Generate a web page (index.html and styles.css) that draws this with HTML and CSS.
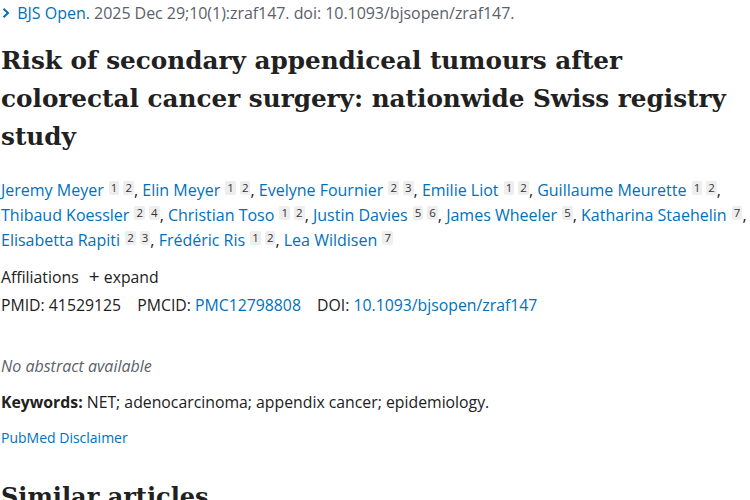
FILE: index.html
```html
<!DOCTYPE html>
<html>
<head>
<meta charset="utf-8">
<link rel="stylesheet" href="styles.css">
</head>
<body>
<main class="article">
  <div class="citation">
    <span class="chev"><svg width="10" height="12" viewBox="0 0 10 12"><path d="M2.5 1.8 L7 6 L2.5 10.2" fill="none" stroke="#0071bc" stroke-width="2"/></svg></span>
    <a class="journal">BJS Open.</a> <span class="cit">2025 Dec 29;10(1):zraf147. doi: 10.1093/bjsopen/zraf147.</span>
  </div>
  <h1 class="title">Risk of secondary appendiceal tumours after<br>colorectal cancer surgery: nationwide Swiss registry<br>study</h1>
  <div class="authors">
    <a>Jeremy Meyer</a> <sup><span>1</span><span>2</span></sup>, <a>Elin Meyer</a> <sup><span>1</span><span>2</span></sup>, <a>Evelyne Fournier</a> <sup><span>2</span><span>3</span></sup>, <a>Emilie Liot</a> <sup><span>1</span><span>2</span></sup>, <a>Guillaume Meurette</a> <sup><span>1</span><span>2</span></sup>,<br><a>Thibaud Koessler</a> <sup><span>2</span><span>4</span></sup>, <a>Christian Toso</a> <sup><span>1</span><span>2</span></sup>, <a>Justin Davies</a> <sup><span>5</span><span>6</span></sup>, <a>James Wheeler</a> <sup><span>5</span></sup>, <a>Katharina Staehelin</a> <sup><span>7</span></sup>,<br><a>Elisabetta Rapiti</a> <sup><span>2</span><span>3</span></sup>, <a>Frédéric Ris</a> <sup><span>1</span><span>2</span></sup>, <a>Lea Wildisen</a> <sup><span>7</span></sup>
  </div>
  <div class="affil">Affiliations <span class="expand"><span class="plus">+</span> expand</span></div>
  <div class="ids">
    <span class="id">PMID: 41529125</span>
    <span class="id">PMCID: <a>PMC12798808</a></span>
    <span class="id">DOI: <a>10.1093/bjsopen/zraf147</a></span>
  </div>
  <p class="noabs">No abstract available</p>
  <p class="keywords"><strong>Keywords:</strong> NET; adenocarcinoma; appendix cancer; epidemiology.</p>
  <p class="disclaimer"><a>PubMed Disclaimer</a></p>
  <h2 class="similar">Similar articles</h2>
</main>
</body>
</html>
```
FILE: styles.css
```css
html, body {
  margin: 0;
  padding: 0;
  background: #fff;
}
body {
  font-family: "Open Sans", "Noto Sans", sans-serif;
  color: #212121;
  font-size: 15.8px;
}
a {
  color: #0071bc;
  text-decoration: none;
}
.article {
  width: 750px;
  padding-left: 1px;
}
.citation {
  font-size: 16px;
  line-height: 26px;
  color: #5b616b;
  white-space: nowrap;
}
.chev {
  display: inline-block;
  width: 12px;
}
.cit {
  letter-spacing: -0.05px;
}
.title {
  font-family: "DejaVu Serif", serif;
  font-weight: bold;
  font-size: 24.7px;
  line-height: 38px;
  margin: 16px 0 22px 0;
  color: #212121;
  white-space: nowrap;
}
.authors {
  font-size: 16px;
  line-height: 25px;
  white-space: nowrap;
}
.authors sup {
  font-size: 11.5px;
  vertical-align: 4px;
  line-height: 0;
  margin-left: 1px;
}
.authors sup span {
  display: inline-block;
  background: #eeeeee;
  color: #333;
  padding: 0 2px;
  margin-right: 4px;
  line-height: 14px;
  border-radius: 2px;
}
.authors sup span:last-child {
  margin-right: 0;
}
.affil {
  margin-top: 10px;
  line-height: 26px;
}
.expand {
  margin-left: 6px;
}
.plus {
  font-size: 19px;
}
.ids {
  line-height: 30px;
}
.id {
  margin-right: 12px;
}
.noabs {
  font-style: italic;
  font-size: 16px;
  color: #5b616b;
  margin: 34px 0 0 0;
  line-height: 24px;
}
.keywords {
  margin: 12px 0 0 0;
  line-height: 24px;
}
.disclaimer {
  font-size: 14px;
  margin: 12px 0 0 0;
  line-height: 24px;
}
.similar {
  font-family: "DejaVu Serif", serif;
  font-weight: bold;
  font-size: 24px;
  margin: 32px 0 0 0;
}
```
